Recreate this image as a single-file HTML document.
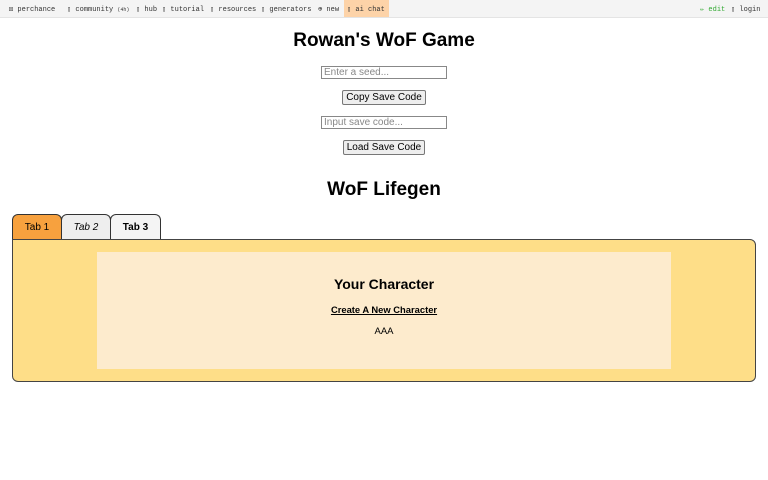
<!DOCTYPE html>
<html><head><style>
body{margin:0;width:768px;height:480px;background:#fff;font-family:"Liberation Sans",sans-serif;position:relative;overflow:hidden}
.bar{position:absolute;left:0;top:0;width:768px;height:17px;background:#f4f4f4;border-bottom:1px solid #e4e4e4;font-family:"Liberation Mono",monospace;font-size:7px;color:#333}
.bar span{position:absolute;top:5px;white-space:nowrap}
.ai{position:absolute;left:344px;top:0;width:45px;height:17px;background:#fdd3a8}
.c{position:absolute;left:0;width:768px;text-align:center}
h1{margin:0;font-size:19px;font-weight:bold}
.inp{position:absolute;left:321px;width:122px;height:11px;border:1px solid #888;font-size:10px;color:#888;line-height:11px;padding-left:2px;box-sizing:content-box}
.btn{position:absolute;height:13px;border:1px solid #777;background:#eee;font-size:10px;line-height:13px;text-align:center;border-radius:2px}
.tab{position:absolute;top:214px;height:25px;border:1px solid #333;border-bottom:none;border-radius:6px 6px 0 0;font-size:10px;line-height:25px;text-align:center;box-sizing:border-box}
</style></head><body>
<div class="bar">
<div class="ai"></div>
<span style="left:9px">⚄ perchance</span>
<span style="left:67px">▯ community <small style="font-size:5px">(4h)</small></span>
<span style="left:136px">▯ hub</span>
<span style="left:162px">▯ tutorial</span>
<span style="left:210px">▯ resources</span>
<span style="left:261px">▯ generators</span>
<span style="left:318px">⊕ new</span>
<span style="left:347px">▯ ai chat</span>
<span style="left:700px;color:#3a3">✏ edit</span>
<span style="left:731px">▯ login</span>
</div>
<div class="c" style="top:30px"><h1>Rowan's WoF Game</h1></div>
<div class="inp" style="top:66px">Enter a seed...</div>
<div class="btn" style="left:342px;top:90px;width:82px">Copy Save Code</div>
<div class="inp" style="top:116px">Input save code...</div>
<div class="btn" style="left:343px;top:140px;width:80px">Load Save Code</div>
<div class="c" style="top:179px"><h1>WoF Lifegen</h1></div>
<div class="tab" style="left:12px;width:50px;background:#f7a13e">Tab 1</div>
<div class="tab" style="left:61px;width:50px;background:#eee;font-style:italic">Tab 2</div>
<div class="tab" style="left:110px;width:51px;background:#f4f4f4;font-weight:bold">Tab 3</div>
<div style="position:absolute;left:12px;top:239px;width:744px;height:143px;box-sizing:border-box;border:1px solid #444;border-radius:0 6px 6px 6px;background:#fede88"></div>
<div style="position:absolute;left:97px;top:252px;width:574px;height:117px;background:#fdebcd"></div>
<div class="c" style="top:276px;font-size:14px;font-weight:bold">Your Character</div>
<div class="c" style="top:304px;font-size:9.4px;font-weight:bold;text-decoration:underline">Create A New Character</div>
<div class="c" style="top:326px;font-size:9.5px">AAA</div>
</body></html>
